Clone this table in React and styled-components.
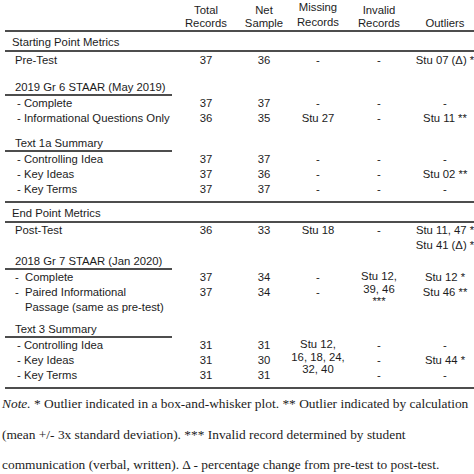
import React from 'react'
import styled, { createGlobalStyle } from 'styled-components'

const GlobalStyle = createGlobalStyle`
	html, body {
		margin: 0;
		padding: 0;
		background: #fff;
	}
`

const cols = '173px 56px 60px 48px 74px 58px'
const ruleColor = '#4d4d4d'

const Page = styled.div`
	width: 474px;
	height: 474px;
	overflow: hidden;
	background: #fff;
	color: #1c1c1c;
	font-family: 'Liberation Sans', Arial, sans-serif;
`

const Table = styled.div`
	margin-left: 5px;
	font-size: 11.3px;
`

const Header = styled.div`
	display: grid;
	grid-template-columns: ${cols};
	align-items: end;
	height: 30px;
	line-height: 13px;
	text-align: center;
	border-bottom: 2px solid ${ruleColor};
`

const HeadCell = styled.div`
	grid-column: ${p => p.$col};
	line-height: ${p => p.$lh || 13}px;
`

const SectionTitle = styled.div`
	height: 16px;
	padding: 2px 0 0 7px;
	line-height: 16px;
	border-bottom: 2px solid ${ruleColor};
`

const Subheading = styled.div`
	box-sizing: border-box;
	width: 167px;
	padding-left: 10px;
	line-height: 14px;
	white-space: nowrap;
	border-bottom: 2px solid ${ruleColor};
`

const Block = styled.div`
	display: grid;
	grid-template-columns: ${cols};
	grid-auto-rows: 15px;
	line-height: 15px;
	padding: ${p => p.$top || 0}px 0 ${p => p.$bottom || 0}px;
	border-bottom: ${p => (p.$rule ? `2px solid ${ruleColor}` : 'none')};
`

const Label = styled.div`
	grid-column: 1;
	grid-row: ${p => p.$row};
	padding-left: ${p => p.$indent}px;
	white-space: nowrap;
`

const Dash = styled.span`
	display: inline-block;
	width: 10px;
`

const Value = styled.div`
	grid-column: ${p => p.$col};
	grid-row: ${p => p.$row} / span ${p => p.$span || 1};
	display: flex;
	flex-direction: column;
	align-items: center;
	white-space: nowrap;
	line-height: ${p => (p.$tight ? '12.5px' : '15px')};
`

const Note = styled.div`
	padding-left: 2px;
	font-family: 'Liberation Serif', 'Times New Roman', serif;
	font-size: 13.4px;
	line-height: 30.5px;
	white-space: nowrap;
`

function DataRow({ row, label, indent = 12, dash, values }) {
	return (
		<>
			<Label $row={row} $indent={indent}>
				{dash && <Dash>-</Dash>}
				{label}
			</Label>
			{values.map((v, i) =>
				v === null ? null : (
					<Value key={i} $col={i + 2} $row={row}>
						{v}
					</Value>
				)
			)}
		</>
	)
}

function Stacked({ col, span, lines }) {
	return (
		<Value $col={col} $row={1} $span={span} $tight>
			{lines.map(l => (
				<span key={l}>{l}</span>
			))}
		</Value>
	)
}

export default function App() {
	return (
		<Page>
			<GlobalStyle />
			<Table>
				<Header>
					<HeadCell $col={2}>Total<br />Records</HeadCell>
					<HeadCell $col={3}>Net<br />Sample</HeadCell>
					<HeadCell $col={4} $lh={15}>Missing<br />Records</HeadCell>
					<HeadCell $col={5}>Invalid<br />Records</HeadCell>
					<HeadCell $col={6}>Outliers</HeadCell>
				</Header>

				<SectionTitle>Starting Point Metrics</SectionTitle>
				<Block $top={1} $bottom={12}>
					<DataRow row={1} indent={10} label="Pre-Test" values={['37', '36', '-', '-', 'Stu 07 (Δ) *']} />
				</Block>

				<Subheading>2019 Gr 6 STAAR (May 2019)</Subheading>
				<Block $bottom={10}>
					<DataRow row={1} label="- Complete" values={['37', '37', '-', '-', '-']} />
					<DataRow row={2} label="- Informational Questions Only" values={['36', '35', 'Stu 27', '-', 'Stu 11 **']} />
				</Block>

				<Subheading>Text 1a Summary</Subheading>
				<Block $bottom={4} $rule>
					<DataRow row={1} label="- Controlling Idea" values={['37', '37', '-', '-', '-']} />
					<DataRow row={2} label="- Key Ideas" values={['37', '36', '-', '-', 'Stu 02 **']} />
					<DataRow row={3} label="- Key Terms" values={['37', '37', '-', '-', '-']} />
				</Block>

				<SectionTitle>End Point Metrics</SectionTitle>
				<Block $bottom={1}>
					<DataRow row={1} indent={10} label="Post-Test" values={['36', '33', 'Stu 18', '-', 'Stu 11, 47 *']} />
					<DataRow row={2} indent={10} label="" values={[null, null, null, null, 'Stu 41 (Δ) *']} />
				</Block>

				<Subheading>2018 Gr 7 STAAR (Jan 2020)</Subheading>
				<Block $bottom={7}>
					<DataRow row={1} indent={10} dash label="Complete" values={['37', '34', '-', null, 'Stu 12 *']} />
					<DataRow row={2} indent={10} dash label="Paired Informational" values={['37', '34', '-', null, 'Stu 46 **']} />
					<Label $row={3} $indent={20}>Passage (same as pre-test)</Label>
					<Stacked col={5} span={3} lines={['Stu 12,', '39, 46', '***']} />
				</Block>

				<Subheading>Text 3 Summary</Subheading>
				<Block $bottom={4} $rule>
					<DataRow row={1} label="- Controlling Idea" values={['31', '31', null, '-', '-']} />
					<DataRow row={2} label="- Key Ideas" values={['31', '30', null, '-', 'Stu 44 *']} />
					<DataRow row={3} label="- Key Terms" values={['31', '31', null, '-', '-']} />
					<Stacked col={4} span={3} lines={['Stu 12,', '16, 18, 24,', '32, 40']} />
				</Block>
			</Table>

			<Note>
				<div>
					<i>Note.</i> * Outlier indicated in a box-and-whisker plot. ** Outlier indicated by calculation
				</div>
				<div>(mean +/- 3x standard deviation). *** Invalid record determined by student</div>
				<div>communication (verbal, written). Δ - percentage change from pre-test to post-test.</div>
			</Note>
		</Page>
	)
}
